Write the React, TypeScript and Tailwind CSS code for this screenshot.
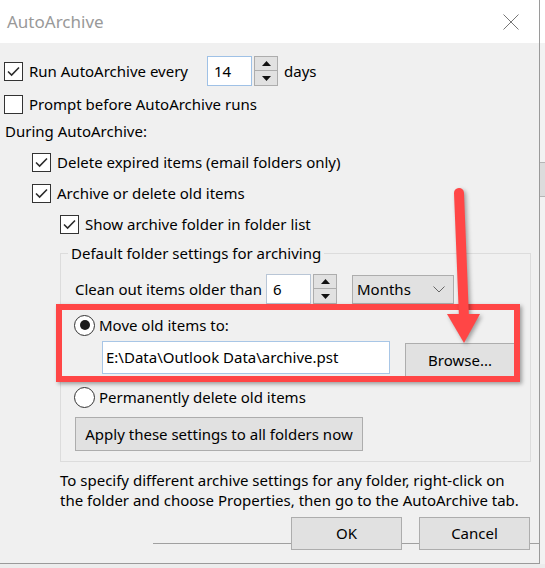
import React from 'react'

function CheckBox({ checked }: { checked?: boolean }) {
  return (
    <div className="w-[19px] h-[19px] border border-[#333] bg-white flex items-center justify-center shrink-0">
      {checked && (
        <svg width="17" height="17" viewBox="0 0 17 17">
          <path d="M3 8.5 L6.6 12 L14 4.5" fill="none" stroke="#2b2b2b" strokeWidth="1.6" />
        </svg>
      )}
    </div>
  )
}

function Radio({ checked }: { checked?: boolean }) {
  return (
    <div className="w-[21px] h-[21px] rounded-full border border-[#333] bg-white flex items-center justify-center shrink-0">
      {checked && <div className="w-[10px] h-[10px] rounded-full bg-[#1a1a1a]" />}
    </div>
  )
}

function Spinner() {
  return (
    <div className="flex flex-col w-[24px] h-[30px] ml-[2px]">
      <div className="h-[15px] border border-[#adadad] bg-[#e1e1e1] flex items-center justify-center">
        <svg width="9" height="5" viewBox="0 0 9 5">
          <path d="M0 5 L4.5 0 L9 5 Z" fill="#111" />
        </svg>
      </div>
      <div className="h-[15px] border border-t-0 border-[#adadad] bg-[#e1e1e1] flex items-center justify-center">
        <svg width="9" height="5" viewBox="0 0 9 5">
          <path d="M0 0 L9 0 L4.5 5 Z" fill="#111" />
        </svg>
      </div>
    </div>
  )
}

function Button({ label, className = '' }: { label: string; className?: string }) {
  return (
    <div className={`border border-[#adadad] bg-[#e1e1e1] flex items-center justify-center text-black ${className}`}>
      {label}
    </div>
  )
}

export default function App() {
  return (
    <div
      className="relative w-[545px] h-[568px] overflow-hidden bg-[#ececec] text-[15px] text-black flex"
      style={{ fontFamily: '"Noto Sans", "Open Sans", sans-serif' }}
    >
      {/* dialog */}
      <div className="relative w-[540px] h-[564px] shrink-0 bg-[#f0f0f0] border-r border-b border-[#9a9a9a] flex flex-col">
        <div className="h-[43px] bg-white flex items-center justify-between pl-[7px] pr-[20px] shrink-0">
          <span className="text-[17px] text-[#999]">AutoArchive</span>
          <svg width="16" height="16" viewBox="0 0 16 16">
            <path d="M0.5 0.5 L15.5 15.5 M15.5 0.5 L0.5 15.5" stroke="#777" strokeWidth="1" />
          </svg>
        </div>

        <div className="flex items-center h-[30px] mt-[13px] pl-[4px]">
          <CheckBox checked />
          <span className="ml-[6px] w-[178px]">Run AutoArchive every</span>
          <div className="w-[45px] h-[30px] border border-[#9fc1e6] bg-white pl-[6px] flex items-center">14</div>
          <Spinner />
          <span className="ml-[6px]">days</span>
        </div>

        <div className="flex items-center h-[26px] mt-[5px] pl-[4px]">
          <CheckBox />
          <span className="ml-[6px]">Prompt before AutoArchive runs</span>
        </div>

        <div className="flex items-center h-[26px] mt-[1px] pl-[5px]">During AutoArchive:</div>

        <div className="flex items-center h-[26px] mt-[5px] pl-[32px]">
          <CheckBox checked />
          <span className="ml-[6px]">Delete expired items (email folders only)</span>
        </div>

        <div className="flex items-center h-[26px] mt-[5px] pl-[32px]">
          <CheckBox checked />
          <span className="ml-[6px]">Archive or delete old items</span>
        </div>

        <div className="flex items-center h-[26px] mt-[5px] pl-[60px]">
          <CheckBox checked />
          <span className="ml-[6px]">Show archive folder in folder list</span>
        </div>

        <fieldset className="ml-[60px] w-[471px] mt-[3px] border border-[#dcdcdc] pl-[7px] pb-[10px]">
          <legend className="h-[26px] leading-[26px] px-[3px]">Default folder settings for archiving</legend>

          <div className="flex items-center h-[30px] mt-[8px] pl-[7px]">
            <span className="w-[191px]">Clean out items older than</span>
            <div className="w-[45px] h-[30px] border border-[#b9c6d6] bg-white pl-[6px] flex items-center">6</div>
            <Spinner />
            <div className="ml-[15px] w-[102px] h-[29px] border border-[#adadad] bg-[#e1e1e1] flex items-center justify-between pl-[4px] pr-[8px]">
              <span>Months</span>
              <svg width="12" height="7" viewBox="0 0 12 7">
                <path d="M0.5 0.5 L6 6 L11.5 0.5" fill="none" stroke="#666" strokeWidth="1" />
              </svg>
            </div>
          </div>

          <div className="flex items-center h-[26px] mt-[8px] pl-[6px]">
            <Radio checked />
            <span className="ml-[4px]">Move old items to:</span>
          </div>

          <div className="flex items-start h-[36px] mt-[3px] pl-[34px]">
            <div className="w-[288px] h-[33px] border border-[#a8c6e6] bg-white flex items-center pl-[3px]">
              E:\Data\Outlook Data\archive.pst
            </div>
            <Button label="Browse..." className="ml-[15px] mt-[2px] w-[110px] h-[34px]" />
          </div>

          <div className="flex items-center h-[26px] mt-[7px] pl-[6px]">
            <Radio />
            <span className="ml-[4px]">Permanently delete old items</span>
          </div>

          <Button label="Apply these settings to all folders now" className="mt-[7px] ml-[7px] w-[288px] h-[34px]" />
        </fieldset>

        <p className="mt-[8px] ml-[60px] leading-[20px] w-[470px]">
          To specify different archive settings for any folder, right-click on the folder and choose Properties, then go to the AutoArchive tab.
        </p>

        <div className="relative flex justify-end gap-[17px] pr-[9px] mt-[7px]">
          <div className="absolute left-[153px] right-0 top-[26px] h-px bg-[#a0a0a0]" />
          <Button label="OK" className="relative w-[111px] h-[33px]" />
          <Button label="Cancel" className="relative w-[111px] h-[33px]" />
        </div>

        {/* annotation: red box */}
        <div className="absolute left-[56px] top-[304px] w-[464px] h-[78px] border-[6px] border-[#ff4646] shadow-[2px_2px_4px_rgba(0,0,0,0.35)]" />
        {/* annotation: red arrow */}
        <svg className="absolute left-0 top-0" width="540" height="564" style={{ filter: 'drop-shadow(2px 2px 2px rgba(0,0,0,0.35))' }}>
          <path d="M459 193 L464 318" stroke="#ff4646" strokeWidth="10" strokeLinecap="round" />
          <path d="M447 314 L480 314 L464 343 Z" fill="#ff4646" />
        </svg>
      </div>

      {/* sliver of window behind */}
      <div className="flex-1 h-[564px] bg-[#f2f2f2] flex flex-col">
        <div className="h-[43px] bg-white" />
        <div className="mt-[119px] h-[35px] border-y border-[#b5b5b5] bg-[#dcdcdc]" />
      </div>
    </div>
  )
}
